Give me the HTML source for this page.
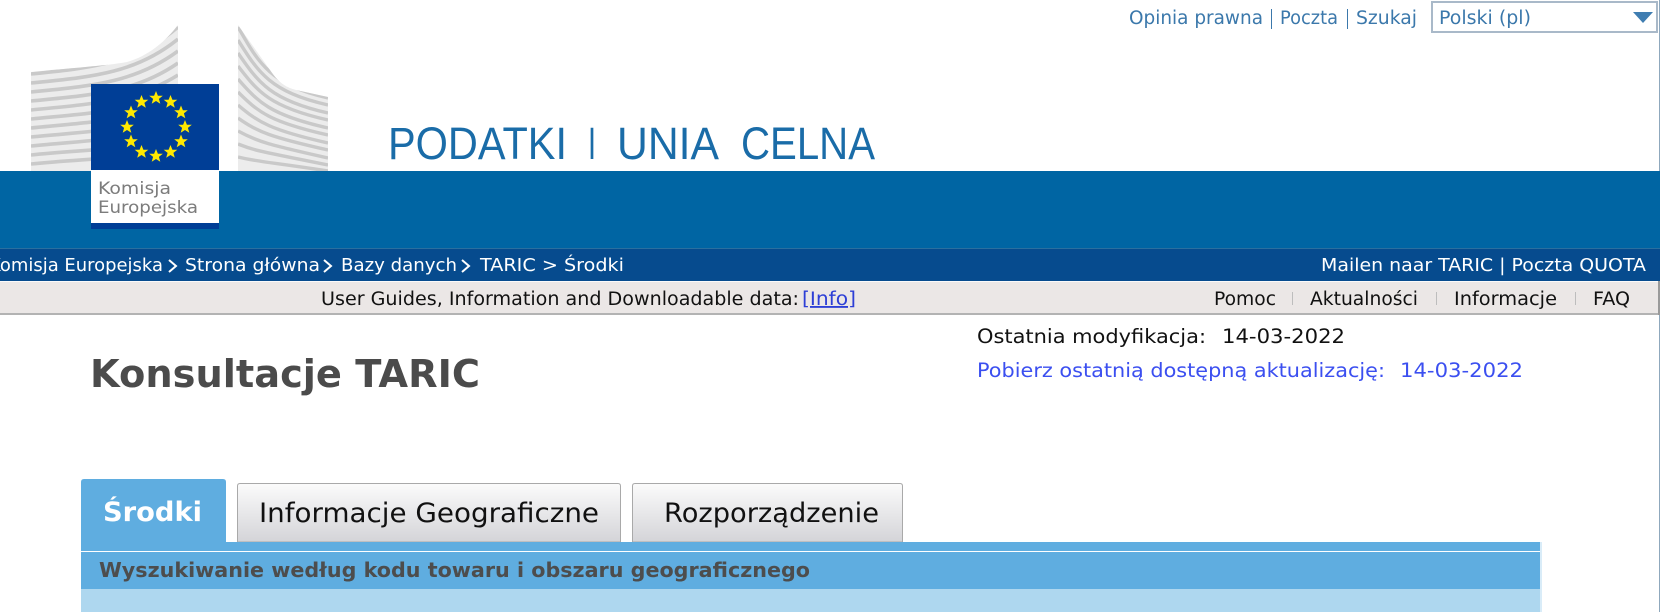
<!DOCTYPE html>
<html lang="pl"><head><meta charset="utf-8"><title>Konsultacje TARIC</title>
<style>html,body{margin:0;padding:0;background:#fff;width:1660px;height:612px;overflow:hidden}svg{display:block}text{font-family:"DejaVu Sans","Liberation Sans",sans-serif;white-space:pre}</style></head>
<body>
<svg width="1660" height="612" viewBox="0 0 1660 612" xmlns="http://www.w3.org/2000/svg">
<defs>
<linearGradient id="tab" x1="0" y1="0" x2="0" y2="1"><stop offset="0" stop-color="#fbfbfb"/><stop offset="1" stop-color="#d4d4d8"/></linearGradient>
<polygon id="s" points="0,-7 1.9,-2.3 6.8,-2.2 2.9,0.9 4.3,5.8 0,3 -4.300,5.800 -2.900,0.900 -6.800,-2.200 -1.900,-2.300" fill="#ffe900"/>
<clipPath id="bl"><path d="M31 72C70 68 105 66 127 62C148 56 165 42 178 25V171H31Z"/></clipPath>
<clipPath id="br"><path d="M238 25L270 70C278 82 285 87 296 90L328 97V171H238Z"/></clipPath>
</defs>
<rect x="1659" y="0" width="1" height="612" fill="#8fa8bd"/>

<!-- building -->
<path d="M31 72C70 68 105 66 127 62C148 56 165 42 178 25V171H31Z" fill="#ececec"/>
<path d="M238 25L270 70C278 82 285 87 296 90L328 97V171H238Z" fill="#ececec"/>
<g clip-path="url(#bl)" fill="none" stroke="#c9c9c9" stroke-width="3.600">
<path d="M31 74C90 68 135 64 178 27"/><path d="M31 83C90 77 135 74 178 39"/><path d="M31 92C90 86 135 83 178 51"/><path d="M31 101C90 95 135 93 178 63"/><path d="M31 110C90 104 135 102 178 75"/><path d="M31 119C90 113 135 112 178 87"/><path d="M31 128C90 122 135 121 178 99"/><path d="M31 137C90 131 135 131 178 111"/><path d="M31 146C90 140 135 140 178 123"/><path d="M31 155C90 149 135 150 178 135"/><path d="M31 164C90 158 135 159 178 147"/>
</g>
<g clip-path="url(#br)" fill="none" stroke="#c9c9c9" stroke-width="3.400">
<path d="M238 27C258 62 270 85 328 98"/><path d="M238 40C258 72 270 92 328 105"/><path d="M238 53C258 82 270 100 328 113"/><path d="M238 66C258 92 270 107 328 120"/><path d="M238 79C258 102 270 115 328 128"/><path d="M238 92C258 112 270 122 328 135"/><path d="M238 105C258 122 270 130 328 143"/><path d="M238 118C258 132 270 137 328 150"/><path d="M238 131C258 142 270 145 328 158"/><path d="M238 144C258 152 270 153 328 165"/><path d="M238 157C258 162 270 162 328 171"/>
</g>

<!-- title -->
<g font-size="45" fill="#1a6ca8" style="font-family:'Liberation Sans',sans-serif">
<text x="388" y="159" textLength="179" lengthAdjust="spacingAndGlyphs" style="font-family:'Liberation Sans',sans-serif">PODATKI</text>
<text x="588" y="159" textLength="8" lengthAdjust="spacingAndGlyphs" style="font-family:'Liberation Sans',sans-serif">I</text>
<text x="617" y="159" textLength="102" lengthAdjust="spacingAndGlyphs" style="font-family:'Liberation Sans',sans-serif">UNIA</text>
<text x="741" y="159" textLength="134" lengthAdjust="spacingAndGlyphs" style="font-family:'Liberation Sans',sans-serif">CELNA</text>
</g>

<!-- bands -->
<rect x="0" y="171" width="1660" height="77" fill="#0065a3"/>
<rect x="0" y="248" width="1660" height="33" fill="#064b8e"/>
<rect x="0" y="248" width="1660" height="1" fill="#2a6f9f"/>
<rect x="0" y="281" width="1660" height="1" fill="#fafafa"/>
<rect x="0" y="282" width="1660" height="31" fill="#ebe7e6"/>
<rect x="0" y="313" width="1660" height="2" fill="#b3b3b3"/>
<rect x="1658" y="281" width="2" height="34" fill="#9a9a9a"/>

<!-- logo -->
<rect x="91" y="84" width="128" height="86" fill="#003e96"/>
<rect x="91" y="170" width="128" height="53" fill="#fff"/>
<rect x="91" y="223" width="128" height="6" fill="#003e96"/>
<g transform="translate(156 127)">
<use href="#s" x="0" y="-29"/><use href="#s" x="14.500" y="-25"/><use href="#s" x="25" y="-14.500"/><use href="#s" x="29" y="0"/><use href="#s" x="25" y="14.500"/><use href="#s" x="14.500" y="25"/><use href="#s" x="0" y="29"/><use href="#s" x="-14.500" y="25"/><use href="#s" x="-25" y="14.500"/><use href="#s" x="-29" y="0"/><use href="#s" x="-25" y="-14.500"/><use href="#s" x="-14.500" y="-25"/>
</g>
<text x="98" y="194" font-size="17" fill="#7c7c7c" textLength="73" lengthAdjust="spacingAndGlyphs">Komisja</text>
<text x="98" y="213" font-size="17" fill="#7c7c7c" textLength="100" lengthAdjust="spacingAndGlyphs">Europejska</text>

<!-- top links -->
<rect x="1432" y="2" width="225" height="30" fill="#fff" stroke="#a9b9c9" stroke-width="2"/>
<path d="M1633 12H1653L1643 23Z" fill="#3f7db1"/>
<g font-size="18.500" fill="#3b78ab">
<text x="1129" y="24" textLength="134" lengthAdjust="spacingAndGlyphs">Opinia prawna</text>
<text x="1280" y="24" textLength="58" lengthAdjust="spacingAndGlyphs">Poczta</text>
<text x="1356" y="24" textLength="61" lengthAdjust="spacingAndGlyphs">Szukaj</text>
<text x="1439" y="24" textLength="92" lengthAdjust="spacingAndGlyphs">Polski (pl)</text>
</g>
<rect x="1271" y="9" width="1" height="20" fill="#3b78ab"/><rect x="1347" y="9" width="1" height="20" fill="#3b78ab"/>

<!-- breadcrumb -->
<g font-size="18" fill="#fff">
<text x="-11" y="271" textLength="174" lengthAdjust="spacingAndGlyphs">Komisja Europejska</text>
<text x="185" y="271" textLength="135" lengthAdjust="spacingAndGlyphs">Strona główna</text>
<text x="341" y="271" textLength="116" lengthAdjust="spacingAndGlyphs">Bazy danych</text>
<text x="480" y="271" textLength="144" lengthAdjust="spacingAndGlyphs">TARIC &gt; Środki</text>
<text x="1321" y="271" textLength="325" lengthAdjust="spacingAndGlyphs">Mailen naar TARIC | Poczta QUOTA</text>
</g>
<g fill="none" stroke="#fff" stroke-width="2"><path d="M169 260L176 266L169 272"/><path d="M324 260L331 266L324 272"/><path d="M462 260L469 266L462 272"/></g>

<!-- grey bar -->
<g font-size="18.500" fill="#111">
<text x="321" y="305" textLength="478" lengthAdjust="spacingAndGlyphs">User Guides, Information and Downloadable data:</text>
<text x="1214" y="305" textLength="62" lengthAdjust="spacingAndGlyphs">Pomoc</text>
<text x="1310" y="305" textLength="108" lengthAdjust="spacingAndGlyphs">Aktualności</text>
<text x="1454" y="305" textLength="103" lengthAdjust="spacingAndGlyphs">Informacje</text>
<text x="1593" y="305" textLength="37" lengthAdjust="spacingAndGlyphs">FAQ</text>
</g>
<text x="802" y="305" font-size="18.500" fill="#2d3fd6" text-decoration="underline" textLength="54" lengthAdjust="spacingAndGlyphs">[Info]</text>
<rect x="1292" y="292" width="1" height="13" fill="#bdbdbd"/><rect x="1436" y="292" width="1" height="13" fill="#bdbdbd"/><rect x="1575" y="292" width="1" height="13" fill="#bdbdbd"/>

<!-- headings -->
<text x="90" y="387" font-size="38" font-weight="bold" fill="#4b4b4b" textLength="390" lengthAdjust="spacingAndGlyphs">Konsultacje TARIC</text>
<text x="977" y="343" font-size="19.500" fill="#111" textLength="229" lengthAdjust="spacingAndGlyphs">Ostatnia modyfikacja:</text>
<text x="1222" y="343" font-size="19.500" fill="#111" textLength="123" lengthAdjust="spacingAndGlyphs">14-03-2022</text>
<text x="977" y="377" font-size="19.500" fill="#3b4ff0" textLength="408" lengthAdjust="spacingAndGlyphs">Pobierz ostatnią dostępną aktualizację:</text>
<text x="1400" y="377" font-size="19.500" fill="#3b4ff0" textLength="123" lengthAdjust="spacingAndGlyphs">14-03-2022</text>

<!-- tabs -->
<path d="M81 542V482Q81 479 84 479H223Q226 479 226 482V542Z" fill="#5fade0"/>
<path d="M237.500 542V486Q237.500 483.500 240 483.500H618Q620.500 483.500 620.500 486V542Z" fill="url(#tab)" stroke="#a9a9a9"/>
<path d="M632.500 542V486Q632.500 483.500 635 483.500H900Q902.500 483.500 902.500 486V542Z" fill="url(#tab)" stroke="#a9a9a9"/>
<text x="103" y="521" font-size="27" font-weight="bold" fill="#fff" textLength="99" lengthAdjust="spacingAndGlyphs">Środki</text>
<text x="259" y="522" font-size="27" fill="#111" textLength="340" lengthAdjust="spacingAndGlyphs">Informacje Geograficzne</text>
<text x="664" y="522" font-size="27" fill="#111" textLength="215" lengthAdjust="spacingAndGlyphs">Rozporządzenie</text>

<!-- panel -->
<rect x="81" y="542" width="1459" height="9" fill="#5fade0"/>
<rect x="81" y="552" width="1459" height="37" fill="#5fade0"/>
<rect x="81" y="589" width="1459" height="23" fill="#aed7ef"/>
<rect x="1540" y="542" width="2" height="70" fill="#d9ecf8"/>
<text x="99" y="577" font-size="20.500" font-weight="bold" fill="#4d4d4d" textLength="711" lengthAdjust="spacingAndGlyphs">Wyszukiwanie według kodu towaru i obszaru geograficznego</text>
</svg>
</body></html>
